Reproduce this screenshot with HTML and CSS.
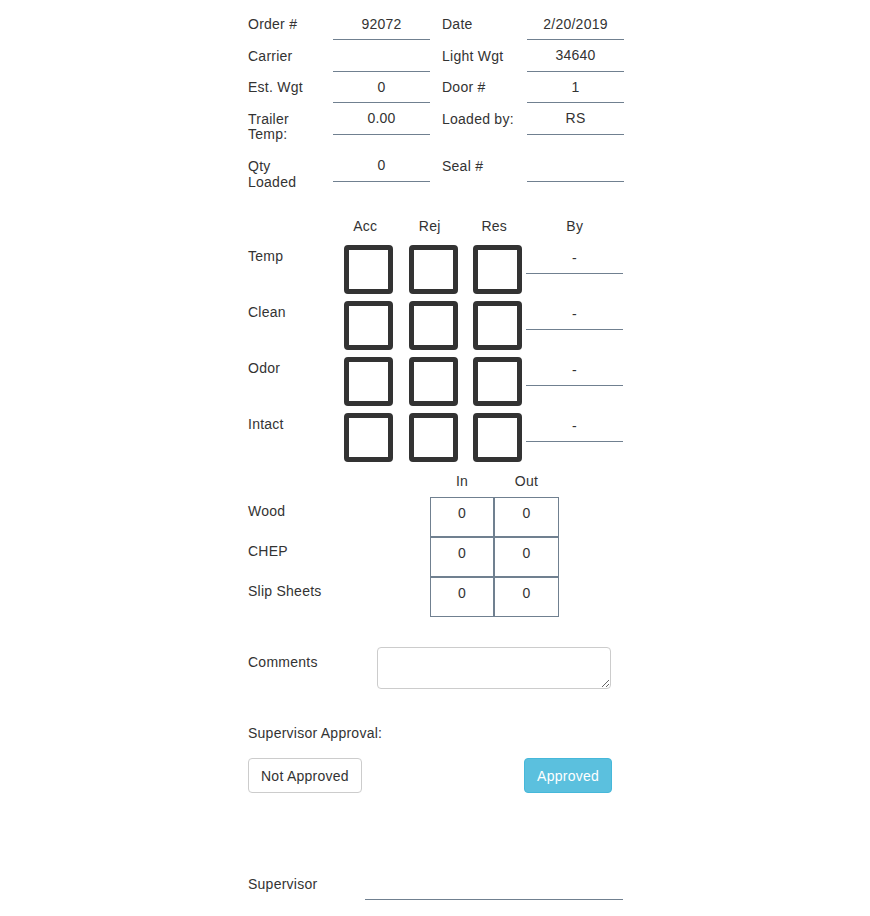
FILE: index.html
```html
<!DOCTYPE html>
<html>
<head>
<meta charset="utf-8">
<link rel="stylesheet" href="styles.css">
</head>
<body>
<div class="page">
  <div class="info">
    <div class="lbl">Order #</div><div class="field">92072</div><div></div>
    <div class="lbl">Date</div><div class="field">2/20/2019</div>

    <div class="lbl">Carrier</div><div class="field"></div><div></div>
    <div class="lbl">Light Wgt</div><div class="field">34640</div>

    <div class="lbl">Est. Wgt</div><div class="field">0</div><div></div>
    <div class="lbl">Door #</div><div class="field">1</div>

    <div class="lbl">Trailer<br>Temp:</div><div class="field">0.00</div><div></div>
    <div class="lbl">Loaded by:</div><div class="field">RS</div>

    <div class="lbl">Qty<br>Loaded</div><div class="field">0</div><div></div>
    <div class="lbl">Seal #</div><div class="field"></div>
  </div>

  <div class="checks">
    <div class="hd"></div><div class="hd">Acc</div><div class="hd">Rej</div><div class="hd">Res</div><div class="hd">By</div>

    <div class="lbl">Temp</div>
    <div class="cell"><div class="box"></div></div>
    <div class="cell"><div class="box"></div></div>
    <div class="cell"><div class="box"></div></div>
    <div class="by">-</div>

    <div class="lbl">Clean</div>
    <div class="cell"><div class="box"></div></div>
    <div class="cell"><div class="box"></div></div>
    <div class="cell"><div class="box"></div></div>
    <div class="by">-</div>

    <div class="lbl">Odor</div>
    <div class="cell"><div class="box"></div></div>
    <div class="cell"><div class="box"></div></div>
    <div class="cell"><div class="box"></div></div>
    <div class="by">-</div>

    <div class="lbl">Intact</div>
    <div class="cell"><div class="box"></div></div>
    <div class="cell"><div class="box"></div></div>
    <div class="cell"><div class="box"></div></div>
    <div class="by">-</div>
  </div>

  <div class="pallets">
    <div class="ph"></div><div class="ph">In</div><div class="ph">Out</div>

    <div class="plbl">Wood</div><div class="pcell">0</div><div class="pcell">0</div>
    <div class="plbl">CHEP</div><div class="pcell">0</div><div class="pcell">0</div>
    <div class="plbl">Slip Sheets</div><div class="pcell">0</div><div class="pcell">0</div>
  </div>

  <div class="comments">
    <div class="clbl">Comments</div>
    <textarea class="ctext"></textarea>
  </div>

  <div class="approval-title">Supervisor Approval:</div>
  <div class="buttons">
    <button class="btn btn-default">Not Approved</button>
    <button class="btn btn-info">Approved</button>
  </div>

  <div class="supervisor">
    <div class="slbl">Supervisor</div>
    <div class="sfield"></div>
  </div>
</div>
</body>
</html>
```
FILE: styles.css
```css
html, body {
  margin: 0;
  padding: 0;
  background: #fff;
}
body {
  font-family: "Liberation Sans", Arial, sans-serif;
  font-size: 14px;
  letter-spacing: 0.25px;
  color: #333;
}
.page {
  width: 376px;
  margin-left: 248px;
}
.info {
  padding-top: 8.5px;
  display: grid;
  grid-template-columns: 85px 97px 12px 85px 97px;
  align-items: start;
}
.lbl {
  padding: 8.5px 0 7.5px;
  line-height: 15.6px;
}
.field {
  height: 31.6px;
  box-sizing: border-box;
  border-bottom: 1px solid #708090;
  text-align: center;
  line-height: 31px;
}
.checks {
  margin-top: 13px;
  display: grid;
  grid-template-columns: 85px 64.5px 64.5px 64.5px 96.5px;
  grid-auto-rows: 56px;
  grid-template-rows: 30px;
  align-items: start;
}
.hd {
  line-height: 30px;
  text-align: center;
}
.cell {
  padding-top: 4.5px;
  padding-left: 11px;
}
.box {
  width: 49px;
  height: 49px;
  box-sizing: border-box;
  border: 5px solid #333;
  border-radius: 4px;
}
.by {
  height: 33px;
  margin-left: -0.5px;
  box-sizing: border-box;
  border-bottom: 1px solid #708090;
  text-align: center;
  line-height: 34px;
}
.pallets {
  display: grid;
  grid-template-columns: 182px 64px 65px;
  grid-template-rows: 32px;
  grid-auto-rows: 40px;
}
.ph {
  line-height: 32px;
  text-align: center;
}
.plbl {
  padding-top: 7.5px;
  line-height: 15.6px;
}
.pcell {
  border: 1px solid #708090;
  text-align: center;
  padding-top: 5px;
  line-height: 20px;
}
.comments {
  margin-top: 30px;
  display: flex;
  align-items: flex-start;
}
.clbl {
  width: 129px;
  padding-top: 8px;
  line-height: 15.6px;
}
.ctext {
  width: 234px;
  height: 42px;
  box-sizing: border-box;
  border: 1px solid #ccc;
  border-radius: 4px;
  margin: 0;
  padding: 6px 12px;
  font-family: inherit;
  font-size: 14px;
  resize: both;
  outline: none;
}
.approval-title {
  margin-top: 37.5px;
  line-height: 15.6px;
}
.buttons {
  width: 364px;
  margin-top: 16px;
  display: flex;
  justify-content: space-between;
}
.btn {
  font-family: inherit;
  font-size: 14px;
  letter-spacing: 0.25px;
  line-height: 20px;
  padding: 6.8px 12px;
  border: 1px solid #ccc;
  border-radius: 4px;
  margin: 0;
}
.btn-default {
  background: #fff;
  color: #333;
}
.btn-info {
  background: #5bc0de;
  border-color: #46b8da;
  color: #fff;
}
.supervisor {
  margin-top: 75px;
  display: flex;
  align-items: flex-start;
}
.slbl {
  width: 117px;
  padding-top: 8.5px;
  line-height: 15.6px;
}
.sfield {
  width: 258px;
  height: 32px;
  box-sizing: border-box;
  border-bottom: 1px solid #708090;
}
```
